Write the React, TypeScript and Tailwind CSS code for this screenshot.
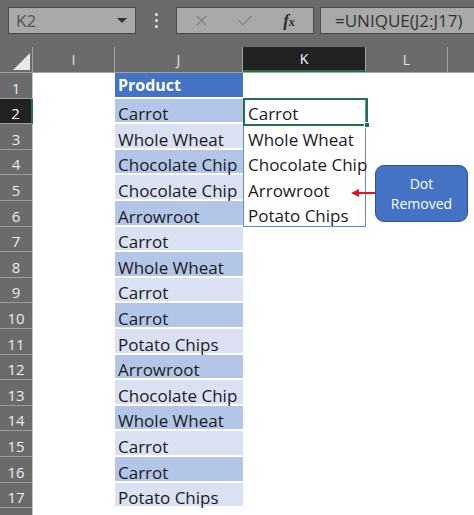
import { Check, X } from "lucide-react";

const FONT = { fontFamily: '"Open Sans", "Liberation Sans", sans-serif' };

const products = [
  "Product",
  "Carrot",
  "Whole Wheat",
  "Chocolate Chip",
  "Chocolate Chip",
  "Arrowroot",
  "Carrot",
  "Whole Wheat",
  "Carrot",
  "Carrot",
  "Potato Chips",
  "Arrowroot",
  "Chocolate Chip",
  "Whole Wheat",
  "Carrot",
  "Carrot",
  "Potato Chips",
];

const unique = ["", "Carrot", "Whole Wheat", "Chocolate Chip", "Arrowroot", "Potato Chips"];

function Toolbar() {
  return (
    <div className="flex h-[47px] items-start bg-[#6b6b6b] pt-[7px]">
      <div className="ml-[8px] flex h-[27px] w-[128px] items-center justify-between border border-[#4a4a4a] bg-[#a9a9a9] pl-[7px] pr-[8px]">
        <span className="text-[17px] leading-none text-[#555]">K2</span>
        <span className="h-0 w-0 border-x-[5px] border-t-[5px] border-x-transparent border-t-[#333]" />
      </div>
      <div className="flex h-[27px] w-[40px] flex-col items-center justify-center gap-[3px]">
        <span className="h-[3px] w-[3px] rounded-full bg-[#e6e6e6]" />
        <span className="h-[3px] w-[3px] rounded-full bg-[#e6e6e6]" />
        <span className="h-[3px] w-[3px] rounded-full bg-[#e6e6e6]" />
      </div>
      <div className="flex h-[27px] w-[138px] items-center border border-[#4a4a4a] bg-[#a9a9a9]">
        <div className="flex w-[48px] justify-center">
          <X size={17} strokeWidth={1.6} color="#7e7e7e" />
        </div>
        <div className="flex w-[40px] justify-center">
          <Check size={18} strokeWidth={2.2} color="#8a8a8a" />
        </div>
        <div className="flex w-[48px] justify-center">
          <span
            className="text-[17px] font-bold italic leading-none text-[#2b2b2b]"
            style={{ fontFamily: '"Liberation Serif", serif' }}
          >
            f<span className="text-[12px]">x</span>
          </span>
        </div>
      </div>
      <div className="ml-[6px] flex h-[27px] flex-1 items-center border border-r-0 border-[#4a4a4a] bg-[#a9a9a9] pl-[14px]">
        <span className="text-[17px] leading-none text-[#333]">=UNIQUE(J2:J17)</span>
      </div>
    </div>
  );
}

function ColumnHeaders() {
  const cols = [
    { name: "I", w: "w-[82px]" },
    { name: "J", w: "w-[128px]" },
    { name: "K", w: "w-[123px]" },
    { name: "L", w: "w-[82px]" },
  ];
  return (
    <div className="flex h-[26px] border-b border-[#a3a3a3] bg-[#6b6b6b]">
      <div className="relative w-[33px] border-r border-[#a3a3a3]">
        <span className="absolute bottom-[2px] right-[2px] h-0 w-0 border-b-[17px] border-l-[17px] border-b-[#e8e8e8] border-l-transparent" />
      </div>
      {cols.map((c) =>
        c.name === "K" ? (
          <div
            key={c.name}
            className={`${c.w} flex items-center justify-center border-b-2 border-r border-b-[#217346] border-r-[#a3a3a3] bg-[#222] text-[14px] text-white`}
          >
            {c.name}
          </div>
        ) : (
          <div
            key={c.name}
            className={`${c.w} flex items-center justify-center border-r border-[#a3a3a3] text-[14px] text-[#e2e2e2]`}
          >
            {c.name}
          </div>
        )
      )}
      <div className="flex-1" />
    </div>
  );
}

function Row({ r }: { r: number }) {
  const j = products[r - 1];
  const k = unique[r - 1] ?? "";
  const selected = r === 2;
  const jBg = r === 1 ? "bg-[#4472c4]" : r % 2 === 0 ? "bg-[#b4c6e7]" : "bg-[#d9e1f2]";
  const spill = r >= 2 && r <= 6;
  return (
    <div className="flex h-[25.6px]">
      <div
        className={`flex w-[33px] items-end justify-center border-b border-[#9c9c9c] pb-[2px] text-[15px] leading-none ${
          selected ? "border-r-2 border-r-[#217346] bg-[#222] text-white" : "border-r border-r-[#c4c4c4] bg-[#6b6b6b] text-[#ececec]"
        }`}
      >
        {r}
      </div>
      <div className="w-[82px]" />
      <div className={`flex w-[128px] border-b-2 border-white pl-[3px] ${jBg} ${r === 1 ? "items-center pt-[1px]" : "items-end"}`}>
        <span
          className={`whitespace-nowrap leading-none ${
            r === 1 ? "text-[16px] font-bold text-white" : "text-[17px] text-[#1b1b1b]"
          }`}
        >
          {j}
        </span>
      </div>
      <div
        className={`flex w-[123px] items-end pb-[2px] pl-[4px] ${
          spill ? "border-x border-[#5b8dd6]" : ""
        } ${r === 6 ? "border-b border-b-[#5b8dd6]" : ""}`}
      >
        <span className="whitespace-nowrap text-[17px] leading-none text-[#1b1b1b]">{k}</span>
      </div>
      <div className="flex-1" />
    </div>
  );
}

export default function App() {
  return (
    <div className="relative h-[515px] w-[474px] overflow-hidden bg-white" style={FONT}>
      <Toolbar />
      <ColumnHeaders />
      <div>
        {Array.from({ length: 18 }, (_, i) => i + 1).map((r) =>
          r <= 17 ? (
            <Row key={r} r={r} />
          ) : (
            <div key={r} className="flex h-[25.6px]">
              <div className="w-[33px] border-r border-[#c4c4c4] bg-[#6b6b6b]" />
            </div>
          )
        )}
      </div>

      {/* active cell K2 */}
      <div className="pointer-events-none absolute left-[243px] top-[98px] h-[28px] w-[125px] border-2 border-[#217346]">
        <span className="absolute -bottom-[4px] -right-[4px] h-[6px] w-[6px] border border-white bg-[#217346]" />
      </div>

      {/* arrow */}
      <svg className="absolute left-[348px] top-[186px]" width="28" height="14" viewBox="0 0 28 14">
        <line x1="9" y1="7" x2="27" y2="7" stroke="#e5141c" strokeWidth="2" />
        <path d="M3 7 L11 3 L11 11 Z" fill="#e5141c" />
      </svg>

      {/* callout */}
      <div className="absolute left-[375px] top-[165px] flex h-[57px] w-[93px] flex-col items-center justify-center rounded-[9px] border-[1.5px] border-[#2f528f] bg-[#4472c4] text-[14px] leading-[20px] text-white">
        <span>Dot</span>
        <span>Removed</span>
      </div>
    </div>
  );
}
